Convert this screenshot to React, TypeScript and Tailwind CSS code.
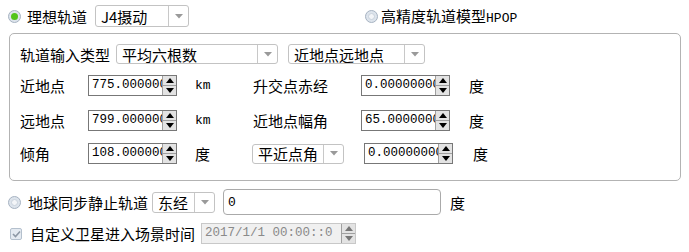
import React from "react";

const cjk = { fontFamily: '"Noto Sans CJK SC", "Noto Sans", sans-serif' };
const mono = { fontFamily: '"Liberation Mono", "DejaVu Sans Mono", monospace' };

function Radio({ checked }: { checked?: boolean }) {
  return (
    <span className="w-[13px] h-[13px] rounded-full border border-[#a7b3c2] bg-[#dde4ec] flex items-center justify-center shrink-0">
      <span className={`w-[7px] h-[7px] rounded-full ${checked ? "bg-[#52c41a]" : "bg-[#f3f5f8] border border-[#c9d2dc]"}`} />
    </span>
  );
}

function Arrow() {
  return (
    <svg width="8" height="5" viewBox="0 0 8 5">
      <path d="M0 0 L8 0 L4 4.5 Z" fill="#9a9a9a" />
    </svg>
  );
}

function Combo({ text, w, h = 20 }: { text: string; w: number; h?: number }) {
  return (
    <div
      className="flex border border-[#c3c3c3] rounded-[3px] bg-white shrink-0"
      style={{ width: w, height: h }}
    >
      <div className="flex-1 flex items-center pl-[5px] text-[15px] leading-none text-black whitespace-nowrap overflow-hidden">{text}</div>
      <div className="w-[20px] flex items-center justify-center border-l border-[#c8c8c8]">
        <Arrow />
      </div>
    </div>
  );
}

function Spin({ value, w = 89, disabled }: { value: string; w?: number; disabled?: boolean }) {
  return (
    <div
      className={`flex h-[21px] border shrink-0 ${disabled ? "border-[#c8c8c8] bg-[#f0f0f0]" : "border-[#777] bg-white"}`}
      style={{ width: w }}
    >
      <div
        className={`flex-1 flex items-center pl-[3px] text-[12.5px] leading-none whitespace-nowrap overflow-hidden ${disabled ? "text-[#8a8a8a]" : "text-black"}`}
        style={mono}
      >
        {value}
      </div>
      <div className="w-[14px] flex flex-col bg-[#e3e3e3] border-l border-[#a0a0a0]">
        <div className="flex-1 flex items-center justify-center border-b border-[#a0a0a0]">
          <svg width="8" height="5" viewBox="0 0 8 5"><path d="M0 5 L8 5 L4 0 Z" fill={disabled ? "#777" : "#000"} /></svg>
        </div>
        <div className="flex-1 flex items-center justify-center">
          <svg width="8" height="5" viewBox="0 0 8 5"><path d="M0 0 L8 0 L4 5 Z" fill={disabled ? "#777" : "#000"} /></svg>
        </div>
      </div>
    </div>
  );
}

const lbl = "text-[15px] leading-none text-black whitespace-nowrap shrink-0";
const unit = "text-[13px] leading-none text-black shrink-0";

export default function App() {
  return (
    <div className="w-[689px] h-[252px] bg-white overflow-hidden" style={cjk}>
      {/* top row */}
      <div className="flex items-center h-[22px] mt-[5px] pl-[8px]">
        <Radio checked />
        <span className={`${lbl} ml-[6px]`}>理想轨道</span>
        <div className="ml-[8px]">
          <Combo text="J4摄动" w={94} h={22} />
        </div>
        <div className="ml-[176px] flex items-center">
          <Radio />
          <span className="ml-[3px] flex items-baseline">
            <span className={lbl}>高精度轨道模型</span>
            <span className="text-[13px] leading-none" style={mono}>HPOP</span>
          </span>
        </div>
      </div>

      {/* group box */}
      <div className="ml-[9px] mt-[6px] w-[672px] h-[148px] border border-[#b3b3b3] rounded-[5px] pl-[10px]">
        <div className="flex items-center h-[20px] mt-[10px]">
          <span className={`${lbl} w-[96px]`}>轨道输入类型</span>
          <Combo text="平均六根数" w={162} />
          <div className="ml-[10px]">
            <Combo text="近地点远地点" w={137} />
          </div>
        </div>

        <div className="flex items-center h-[21px] mt-[11px]">
          <span className={`${lbl} w-[68px]`}>近地点</span>
          <Spin value="775.000000" />
          <span className={`${unit} w-[76px] pl-[18px]`} style={mono}>km</span>
          <span className={`${lbl} w-[108px]`}>升交点赤经</span>
          <Spin value="0.00000000" />
          <span className={`${lbl} ml-[19px]`}>度</span>
        </div>

        <div className="flex items-center h-[21px] mt-[14px]">
          <span className={`${lbl} w-[68px]`}>远地点</span>
          <Spin value="799.000000" />
          <span className={`${unit} w-[76px] pl-[18px]`} style={mono}>km</span>
          <span className={`${lbl} w-[108px]`}>近地点幅角</span>
          <Spin value="65.0000000" />
          <span className={`${lbl} ml-[19px]`}>度</span>
        </div>

        <div className="flex items-center h-[21px] mt-[12px]">
          <span className={`${lbl} w-[68px]`}>倾角</span>
          <Spin value="108.000000" />
          <span className={`${lbl} w-[75px] pl-[18px]`}>度</span>
          <Combo text="平近点角" w={92} />
          <div className="ml-[20px]">
            <Spin value="0.00000000" />
          </div>
          <span className={`${lbl} ml-[20px]`}>度</span>
        </div>
      </div>

      {/* geostationary row */}
      <div className="flex items-center h-[26px] mt-[8px] pl-[8px]">
        <Radio />
        <span className={`${lbl} ml-[7px]`}>地球同步静止轨道</span>
        <div className="ml-[4px]">
          <Combo text="东经" w={63} h={21} />
        </div>
        <div className="ml-[8px] w-[218px] h-[26px] border border-[#aaa] rounded-[4px] bg-white flex items-center pl-[4px] text-[13px] leading-none" style={mono}>
          0
        </div>
        <span className={`${lbl} ml-[9px]`}>度</span>
      </div>

      {/* custom time row */}
      <div className="flex items-center h-[23px] mt-[7px] pl-[10px]">
        <span className="w-[12px] h-[12px] border border-[#b4c0cd] bg-[#e4eaf1] rounded-[2px] flex items-center justify-center shrink-0">
          <svg width="9" height="8" viewBox="0 0 9 8">
            <path d="M1 4 L3.5 6.5 L8 1.5" fill="none" stroke="#8d98a5" strokeWidth="1.6" />
          </svg>
        </span>
        <span className={`${lbl} ml-[8px]`}>自定义卫星进入场景时间</span>
        <div className="ml-[6px]">
          <Spin value="2017/1/1 00:00::0" w={155} disabled />
        </div>
      </div>
    </div>
  );
}
